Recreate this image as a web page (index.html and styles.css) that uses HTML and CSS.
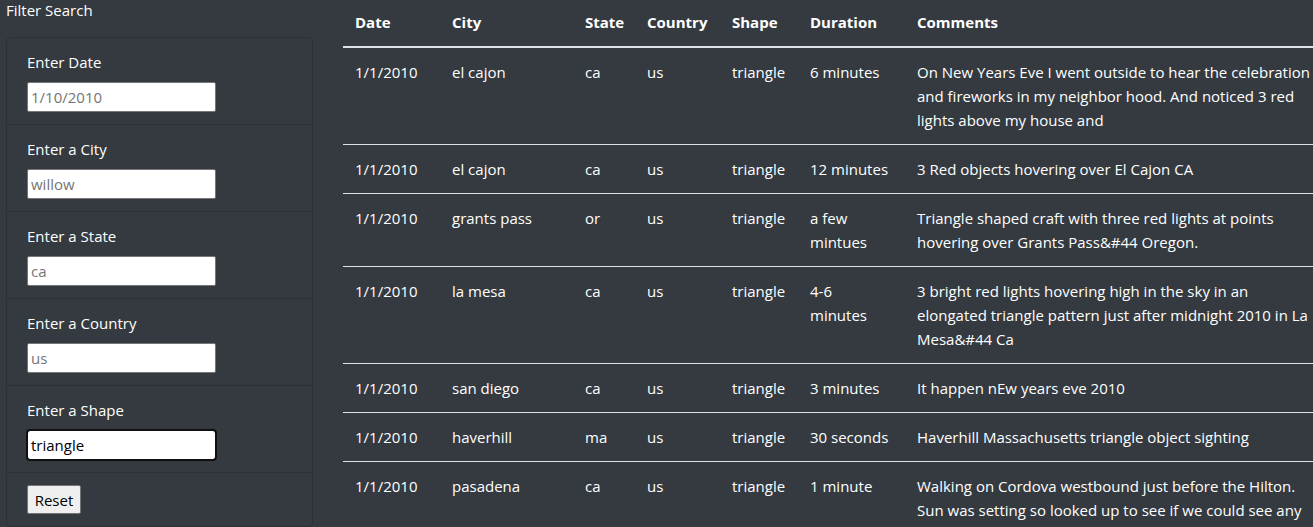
FILE: index.html
```html
<!DOCTYPE html>
<html lang="en">
<head>
<meta charset="utf-8">
<title>UFO Sightings</title>
<link rel="stylesheet" href="styles.css">
</head>
<body>
<div class="page">
  <aside class="filters">
    <div class="filters-title">Filter Search</div>
    <ul class="filter-list">
      <li class="filter-item">
        <label class="filter-label" for="datetime">Enter Date</label>
        <input class="filter-input" id="datetime" type="text" placeholder="1/10/2010">
      </li>
      <li class="filter-item">
        <label class="filter-label" for="city">Enter a City</label>
        <input class="filter-input" id="city" type="text" placeholder="willow">
      </li>
      <li class="filter-item">
        <label class="filter-label" for="state">Enter a State</label>
        <input class="filter-input" id="state" type="text" placeholder="ca">
      </li>
      <li class="filter-item">
        <label class="filter-label" for="country">Enter a Country</label>
        <input class="filter-input" id="country" type="text" placeholder="us">
      </li>
      <li class="filter-item">
        <label class="filter-label" for="shape">Enter a Shape</label>
        <input class="filter-input filter-input-active" id="shape" type="text" value="triangle">
      </li>
      <li class="filter-item">
        <button class="reset-btn" type="button">Reset</button>
      </li>
    </ul>
  </aside>
  <main class="results">
    <table class="ufo-table">
      <colgroup>
        <col class="col-date">
        <col class="col-city">
        <col class="col-state">
        <col class="col-country">
        <col class="col-shape">
        <col class="col-duration">
        <col class="col-comments">
      </colgroup>
      <thead>
        <tr>
          <th>Date</th>
          <th>City</th>
          <th>State</th>
          <th>Country</th>
          <th>Shape</th>
          <th>Duration</th>
          <th>Comments</th>
        </tr>
      </thead>
      <tbody>
        <tr>
          <td>1/1/2010</td><td>el cajon</td><td>ca</td><td>us</td><td>triangle</td><td class="cell-duration">6 minutes</td>
          <td>On New Years Eve I went outside to hear the celebration and fireworks in my neighbor hood. And noticed 3 red lights above my house and</td>
        </tr>
        <tr>
          <td>1/1/2010</td><td>el cajon</td><td>ca</td><td>us</td><td>triangle</td><td class="cell-duration">12 minutes</td>
          <td>3 Red objects hovering over El Cajon CA</td>
        </tr>
        <tr>
          <td>1/1/2010</td><td>grants pass</td><td>or</td><td>us</td><td>triangle</td><td class="cell-duration">a few mintues</td>
          <td>Triangle shaped craft with three red lights at points hovering over Grants Pass&amp;#44 Oregon.</td>
        </tr>
        <tr>
          <td>1/1/2010</td><td>la mesa</td><td>ca</td><td>us</td><td>triangle</td><td class="cell-duration">4-6 minutes</td>
          <td>3 bright red lights hovering high in the sky in an elongated triangle pattern just after midnight 2010 in La Mesa&amp;#44 Ca</td>
        </tr>
        <tr>
          <td>1/1/2010</td><td>san diego</td><td>ca</td><td>us</td><td>triangle</td><td class="cell-duration">3 minutes</td>
          <td>It happen nEw years eve 2010</td>
        </tr>
        <tr>
          <td>1/1/2010</td><td>haverhill</td><td>ma</td><td>us</td><td>triangle</td><td class="cell-duration">30 seconds</td>
          <td>Haverhill Massachusetts triangle object sighting</td>
        </tr>
        <tr>
          <td>1/1/2010</td><td>pasadena</td><td>ca</td><td>us</td><td>triangle</td><td class="cell-duration">1 minute</td>
          <td>Walking on Cordova westbound just before the Hilton. Sun was setting so looked up to see if we could see any</td>
        </tr>
      </tbody>
    </table>
  </main>
</div>
</body>
</html>
```
FILE: styles.css
```css
html, body {
  margin: 0;
  padding: 0;
  overflow: hidden;
  background: #343a40;
}

body {
  color: #fff;
  font-family: "Open Sans", "Noto Sans", "DejaVu Sans", sans-serif;
  font-size: 15px;
  line-height: 24px;
}

.page {
  display: flex;
  align-items: flex-start;
  padding-left: 6px;
}

.filters {
  flex: none;
  width: 307px;
}

.filters-title {
  height: 20px;
  line-height: 20px;
  margin-bottom: 17px;
}

.filter-list {
  list-style: none;
  margin: 0;
  padding: 0;
  border: 1px solid #2c3136;
  border-radius: 4px;
}

.filter-item {
  padding: 12px 20px;
  border-top: 1px solid #2c3136;
}

.filter-item:first-child {
  border-top: none;
}

.filter-label {
  display: block;
  margin-bottom: 8px;
}

.filter-input {
  display: block;
  box-sizing: border-box;
  width: 189px;
  height: 30px;
  margin: 0;
  padding: 1px 3px;
  border: 1px solid #767676;
  border-radius: 2px;
  background: #fff;
  color: #000;
  font-family: inherit;
  font-size: 15px;
}

.filter-input::placeholder {
  color: #757575;
}

.filter-input-active {
  outline: 2px solid #101010;
  outline-offset: -1px;
  border-radius: 3px;
}

.reset-btn {
  display: block;
  box-sizing: border-box;
  height: 29px;
  width: 54px;
  margin: 0;
  padding: 1px 6px;
  border: 1px solid #767676;
  border-radius: 2px;
  background: #efefef;
  color: #000;
  font-family: inherit;
  font-size: 15px;
}

.results {
  flex: none;
  margin-left: 30px;
}

.ufo-table {
  border-collapse: collapse;
  table-layout: fixed;
  width: 980px;
}

.col-date { width: 97px; }
.col-city { width: 133px; }
.col-state { width: 62px; }
.col-country { width: 85px; }
.col-shape { width: 78px; }
.col-duration { width: 107px; }
.col-comments { width: 418px; }

.ufo-table th {
  padding: 10px 12px 12px;
  border-bottom: 2px solid #dee2e6;
  text-align: left;
  vertical-align: bottom;
  font-weight: 700;
}

.ufo-table td {
  padding: 12px;
  border-bottom: 1px solid #dee2e6;
  vertical-align: top;
}

.ufo-table .cell-duration {
  padding-right: 16px;
}
```
